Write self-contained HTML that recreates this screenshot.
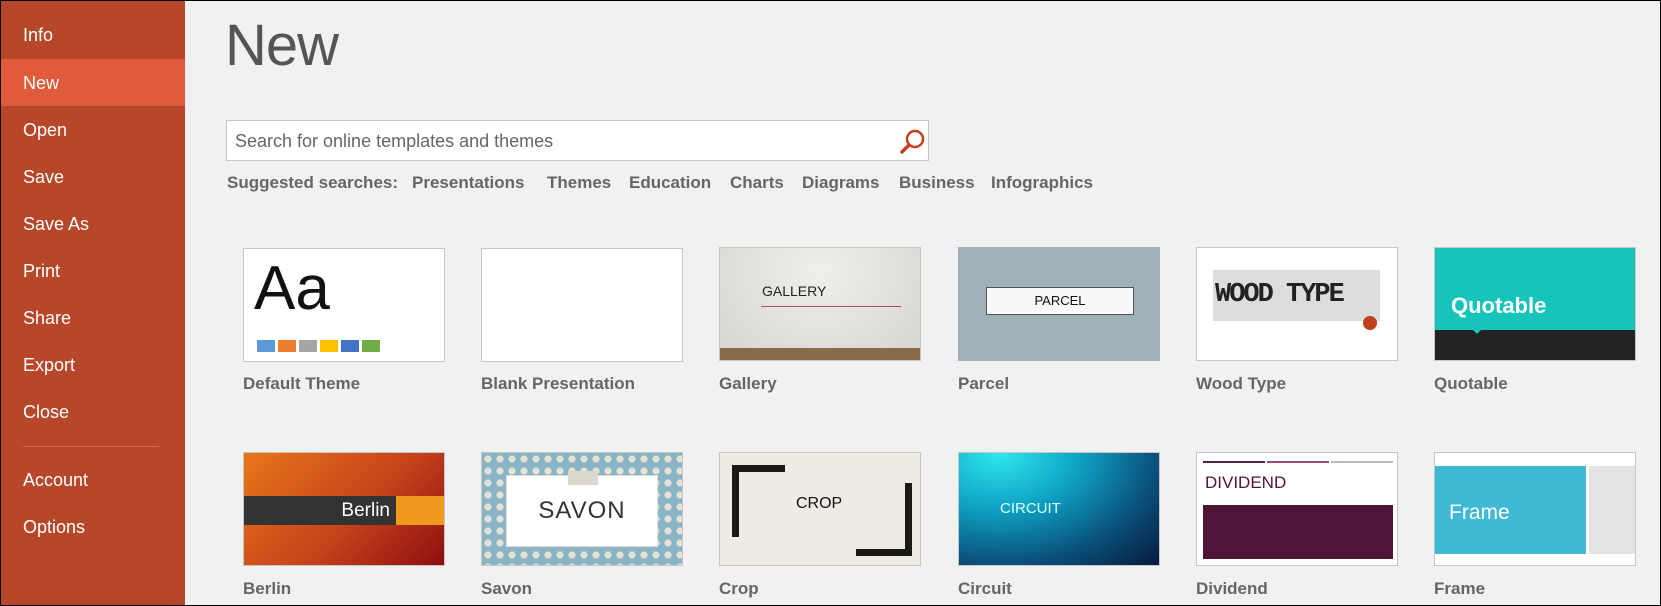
<!DOCTYPE html>
<html><head><meta charset="utf-8"><style>
*{margin:0;padding:0;box-sizing:border-box}
body{width:1661px;height:606px;overflow:hidden;background:#f1f1f1;font-family:"Liberation Sans",sans-serif;position:relative}
.frame{position:absolute;inset:0;border:1px solid #000;pointer-events:none;z-index:9}
.side{position:absolute;left:0;top:0;width:185px;height:606px;background:#b7472a}
.side .it{position:absolute;left:23px;color:#fff;font-size:18px;line-height:20px}
.sel{position:absolute;left:0;top:59px;width:185px;height:47px;background:#e05b3b}
.sep{position:absolute;left:23px;top:446px;width:136px;height:1px;background:#cf6a50}
.a{position:absolute}
h1{position:absolute;left:225px;top:12px;font-size:58px;font-weight:normal;color:#555;letter-spacing:-1px}
.search{position:absolute;left:226px;top:120px;width:703px;height:41px;background:#fff;border:1px solid #c6c6c6}
.search span{position:absolute;left:8px;top:10px;font-size:18px;color:#666}
.sug{position:absolute;top:173px;font-size:17px;font-weight:bold;color:#666}
.t{position:absolute;width:202px;height:114px;border:1px solid #c6c6c6;background:#fff;overflow:hidden}
.lbl{position:absolute;font-size:17px;font-weight:bold;color:#666}
</style></head><body>
<div class="side">
<div class="sel"></div>
<div class="it" style="top:25px">Info</div>
<div class="it" style="top:73px">New</div>
<div class="it" style="top:120px">Open</div>
<div class="it" style="top:167px">Save</div>
<div class="it" style="top:214px">Save As</div>
<div class="it" style="top:261px">Print</div>
<div class="it" style="top:308px">Share</div>
<div class="it" style="top:355px">Export</div>
<div class="it" style="top:402px">Close</div>
<span class="sep"></span>
<div class="it" style="top:470px">Account</div>
<div class="it" style="top:517px">Options</div>
</div>
<h1>New</h1>
<div class="search"><span>Search for online templates and themes</span>
<svg class="a" style="left:670px;top:6px" width="30" height="30" viewBox="0 0 30 30"><circle cx="18" cy="12" r="8" fill="none" stroke="#c43e1c" stroke-width="2.4"/><line x1="12" y1="18" x2="5" y2="25" stroke="#c43e1c" stroke-width="3.4" stroke-linecap="round"/></svg></div>
<span class="sug" style="left:227px">Suggested searches:</span>
<span class="sug" style="left:412px">Presentations</span>
<span class="sug" style="left:547px">Themes</span>
<span class="sug" style="left:629px">Education</span>
<span class="sug" style="left:730px">Charts</span>
<span class="sug" style="left:802px">Diagrams</span>
<span class="sug" style="left:899px">Business</span>
<span class="sug" style="left:991px">Infographics</span>

<!-- row 1 -->
<div class="t" style="left:243px;top:248px">
<div class="a" style="left:10px;top:4px;font-size:62px;color:#111">Aa</div>
<div class="a" style="left:13px;top:91px;width:18px;height:12px;background:#5b9bd5"></div>
<div class="a" style="left:34px;top:91px;width:18px;height:12px;background:#ed7d31"></div>
<div class="a" style="left:55px;top:91px;width:18px;height:12px;background:#a5a5a5"></div>
<div class="a" style="left:76px;top:91px;width:18px;height:12px;background:#ffc000"></div>
<div class="a" style="left:97px;top:91px;width:18px;height:12px;background:#4472c4"></div>
<div class="a" style="left:118px;top:91px;width:18px;height:12px;background:#70ad47"></div>
</div>
<div class="t" style="left:481px;top:248px"></div>
<div class="t" style="left:719px;top:247px;background:radial-gradient(ellipse at 50% 20%,#f0efed,#d6d4d0)">
<div class="a" style="left:42px;top:35px;font-size:14px;color:#222">GALLERY</div>
<div class="a" style="left:41px;top:58px;width:140px;height:1px;background:#b04c6c"></div>
<div class="a" style="left:0;top:100px;width:202px;height:14px;background:#8a6a48"></div>
</div>
<div class="t" style="left:958px;top:247px;background:#9eb1b8;border-color:#9eb1b8">
<div class="a" style="left:27px;top:39px;width:148px;height:28px;background:#f8f8f8;border:1px solid #555;text-align:center;font-size:13px;line-height:26px;color:#111">PARCEL</div>
</div>
<div class="t" style="left:1196px;top:247px">
<div class="a" style="left:16px;top:22px;width:167px;height:51px;background:#ddd;font-family:'Liberation Mono',monospace;font-weight:bold;font-size:27px;color:#222;letter-spacing:-2px;line-height:51px;padding-left:2px">WOOD TYPE</div>
<div class="a" style="left:166px;top:68px;width:14px;height:14px;border-radius:50%;background:#c0401f"></div>
</div>
<div class="t" style="left:1434px;top:247px;background:#222">
<div class="a" style="left:0;top:0;width:202px;height:82px;background:#17c4bb"></div>
<div class="a" style="left:36px;top:80px;border:6px solid transparent;border-top-color:#17c4bb"></div>
<div class="a" style="left:16px;top:45px;font-size:22px;font-weight:bold;color:#fff">Quotable</div>
</div>
<span class="lbl" style="left:243px;top:374px">Default Theme</span>
<span class="lbl" style="left:481px;top:374px">Blank Presentation</span>
<span class="lbl" style="left:719px;top:374px">Gallery</span>
<span class="lbl" style="left:958px;top:374px">Parcel</span>
<span class="lbl" style="left:1196px;top:374px">Wood Type</span>
<span class="lbl" style="left:1434px;top:374px">Quotable</span>

<!-- row 2 -->
<div class="t" style="left:243px;top:452px;background:linear-gradient(135deg,#e8761a,#c5431a 55%,#8f0e10)">
<div class="a" style="left:0;top:43px;width:152px;height:29px;background:#333;color:#fff;font-size:19px;text-align:right;padding-right:6px;line-height:29px">Berlin</div>
<div class="a" style="left:152px;top:43px;width:50px;height:29px;background:#ef991d"></div>
</div>
<div class="t" style="left:481px;top:452px;background:radial-gradient(circle,#e7e2d6 3px,#8ab5c4 4px) 0 0/12px 12px">
<div class="a" style="left:24px;top:22px;width:152px;height:72px;background:#fff;border:1px solid #ddd;text-align:center;font-size:24px;line-height:70px;color:#333;letter-spacing:1px">SAVON</div>
<div class="a" style="left:86px;top:18px;width:30px;height:14px;background:#ddd8cc"></div>
</div>
<div class="t" style="left:719px;top:452px;background:#eeebe4">
<div class="a" style="left:12px;top:12px;width:53px;height:7px;background:#1a1a14"></div>
<div class="a" style="left:12px;top:12px;width:7px;height:72px;background:#1a1a14"></div>
<div class="a" style="left:136px;top:96px;width:56px;height:7px;background:#1a1a14"></div>
<div class="a" style="left:185px;top:30px;width:7px;height:73px;background:#1a1a14"></div>
<div class="a" style="left:76px;top:42px;font-size:16px;color:#111">CROP</div>
</div>
<div class="t" style="left:958px;top:452px;background:radial-gradient(ellipse at 20% 0%,#2ee8ee,#0fa3c4 35%,#0a4f7a 70%,#061a3b)">
<div class="a" style="left:41px;top:47px;font-size:15px;color:#dff">CIRCUIT</div>
</div>
<div class="t" style="left:1196px;top:452px">
<div class="a" style="left:6px;top:8px;width:62px;height:2px;background:#5d2340"></div>
<div class="a" style="left:70px;top:8px;width:62px;height:2px;background:#a04878"></div>
<div class="a" style="left:134px;top:8px;width:62px;height:2px;background:#bbb"></div>
<div class="a" style="left:8px;top:20px;font-size:17px;color:#4f1538">DIVIDEND</div>
<div class="a" style="left:6px;top:52px;width:190px;height:54px;background:#4f1538"></div>
</div>
<div class="t" style="left:1434px;top:452px">
<div class="a" style="left:0;top:13px;width:151px;height:88px;background:#3fb9d4"></div>
<div class="a" style="left:154px;top:13px;width:48px;height:88px;background:#e3e3e3"></div>
<div class="a" style="left:14px;top:48px;font-size:21px;color:#fff">Frame</div>
</div>
<span class="lbl" style="left:243px;top:579px">Berlin</span>
<span class="lbl" style="left:481px;top:579px">Savon</span>
<span class="lbl" style="left:719px;top:579px">Crop</span>
<span class="lbl" style="left:958px;top:579px">Circuit</span>
<span class="lbl" style="left:1196px;top:579px">Dividend</span>
<span class="lbl" style="left:1434px;top:579px">Frame</span>
<div class="frame"></div>
</body></html>
